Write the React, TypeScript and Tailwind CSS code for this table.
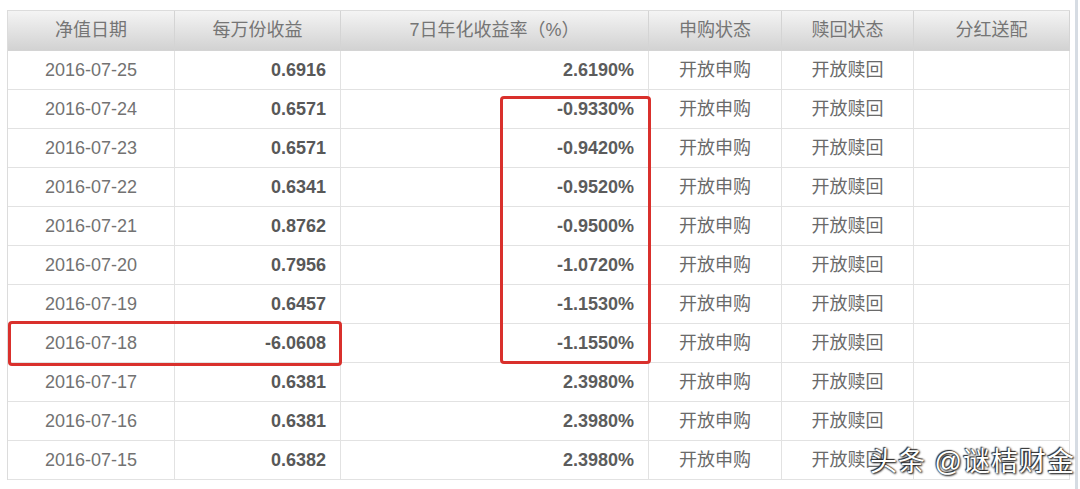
import React from 'react';

const rows = [
  ['2016-07-25', '0.6916', '2.6190%'],
  ['2016-07-24', '0.6571', '-0.9330%'],
  ['2016-07-23', '0.6571', '-0.9420%'],
  ['2016-07-22', '0.6341', '-0.9520%'],
  ['2016-07-21', '0.8762', '-0.9500%'],
  ['2016-07-20', '0.7956', '-1.0720%'],
  ['2016-07-19', '0.6457', '-1.1530%'],
  ['2016-07-18', '-6.0608', '-1.1550%'],
  ['2016-07-17', '0.6381', '2.3980%'],
  ['2016-07-16', '0.6381', '2.3980%'],
  ['2016-07-15', '0.6382', '2.3980%'],
];

const headers = ['净值日期', '每万份收益', '7日年化收益率（%）', '申购状态', '赎回状态', '分红送配'];

const cjk = { fontFamily: '"Liberation Sans", "Noto Sans CJK SC", sans-serif' };

export default function App() {
  return (
    <div className="relative w-[1080px] h-[489px] bg-white overflow-hidden" style={cjk}>
      <div className="flex h-full">
        <div className="pt-[10px] pl-[7px]">
          <div className="grid grid-cols-[167px_166px_308px_133px_132px_156px] border-l border-t border-[#dcdcdc]">
            {headers.map((h) => (
              <div
                key={h}
                className="h-[40px] flex items-center justify-center border-r border-b border-[#d4d4d4] bg-gradient-to-b from-[#f4f4f4] to-[#d2d2d2] text-[18px] text-[#757575]"
              >
                {h}
              </div>
            ))}
            {rows.map(([date, income, rate]) => (
              <React.Fragment key={date}>
                <div className="h-[39px] flex items-center justify-center border-r border-b border-[#e2e2e2] text-[18px] text-[#727272]">
                  {date}
                </div>
                <div className="h-[39px] flex items-center justify-end pr-[14px] border-r border-b border-[#e2e2e2] text-[18px] font-bold text-[#585858]">
                  {income}
                </div>
                <div className="h-[39px] flex items-center justify-end pr-[14px] border-r border-b border-[#e2e2e2] text-[18px] font-bold text-[#5c5c5c]">
                  {rate}
                </div>
                <div className="h-[39px] flex items-center justify-center border-r border-b border-[#e2e2e2] text-[18px] text-[#6a6a6a]">
                  开放申购
                </div>
                <div className="h-[39px] flex items-center justify-center border-r border-b border-[#e2e2e2] text-[18px] text-[#6a6a6a]">
                  开放赎回
                </div>
                <div className="h-[39px] border-r border-b border-[#e2e2e2]" />
              </React.Fragment>
            ))}
          </div>
        </div>
        <div className="flex-1" />
        <div className="w-[3px] h-full bg-[#d6dce3]" />
        <div className="w-[2px] h-full" />
      </div>

      {/* red highlight boxes */}
      <div className="absolute left-[8px] top-[321px] w-[334px] h-[45px] border-[3px] border-[#d9302c] rounded-[4px]" />
      <div className="absolute left-[500px] top-[96px] w-[151px] h-[268px] border-[3px] border-[#d9302c] rounded-[4px]" />

      {/* watermark */}
      <div
        className="absolute left-[870px] top-[442px] text-[27px] text-white tracking-[1px]"
        style={{ textShadow: '0 0 2px #222, 1px 1px 2px #111, -1px -1px 1px #333' }}
      >
        头条 @谜桔财金
      </div>
    </div>
  );
}
